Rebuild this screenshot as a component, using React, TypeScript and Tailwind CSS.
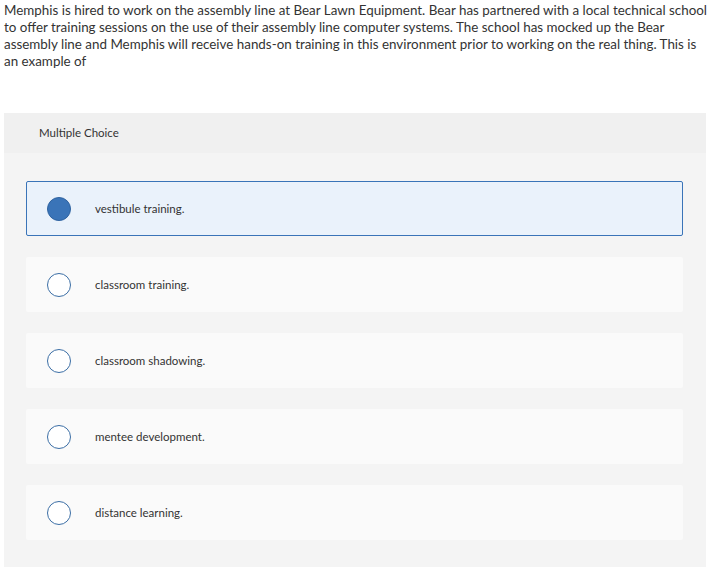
const options = [
  'vestibule training.',
  'classroom training.',
  'classroom shadowing.',
  'mentee development.',
  'distance learning.',
]

const stem = [
  'Memphis is hired to work on the assembly line at Bear Lawn Equipment. Bear has partnered with a local technical school',
  'to offer training sessions on the use of their assembly line computer systems. The school has mocked up the Bear',
  'assembly line and Memphis will receive hands-on training in this environment prior to working on the real thing. This is',
  'an example of',
]

export default function App() {
  const selected = 0

  return (
    <div className="min-h-[567px] bg-white font-['Lato','Open_Sans',sans-serif] text-[#333]">
      <div className="px-1 pt-[2px] text-[13.4px] leading-[17px] text-[#333]">
        {stem.map((line) => (
          <div key={line} className="whitespace-nowrap">{line}</div>
        ))}
      </div>

      <div className="ml-1 mt-[43px] w-[702px] bg-[#f4f4f4] pb-[27px]">
        <div className="flex h-10 items-center bg-[#f0f0f0] pl-[35px] text-[11.5px] text-[#333]">
          Multiple Choice
        </div>
        <div className="flex flex-col gap-[21px] pl-[22px] pr-[23px] pt-[28px]">
          {options.map((opt, i) => {
            const active = i === selected
            return (
              <div
                key={opt}
                className={
                  active
                    ? 'flex h-[55px] items-center rounded-[2px] border border-[#3a74b8] bg-[#eaf2fb]'
                    : 'flex h-[55px] items-center rounded-[2px] bg-[#fafafa]'
                }
              >
                <span
                  className={
                    active
                      ? 'ml-[20px] h-6 w-6 shrink-0 rounded-full border border-[#2f63a0] bg-[#3a74b8]'
                      : 'ml-[21px] h-6 w-6 shrink-0 rounded-full border-[1.5px] border-[#3b6ea5] bg-white'
                  }
                />
                <span className="ml-[24px] text-[11.5px] text-[#333]">{opt}</span>
              </div>
            )
          })}
        </div>
      </div>
    </div>
  )
}
